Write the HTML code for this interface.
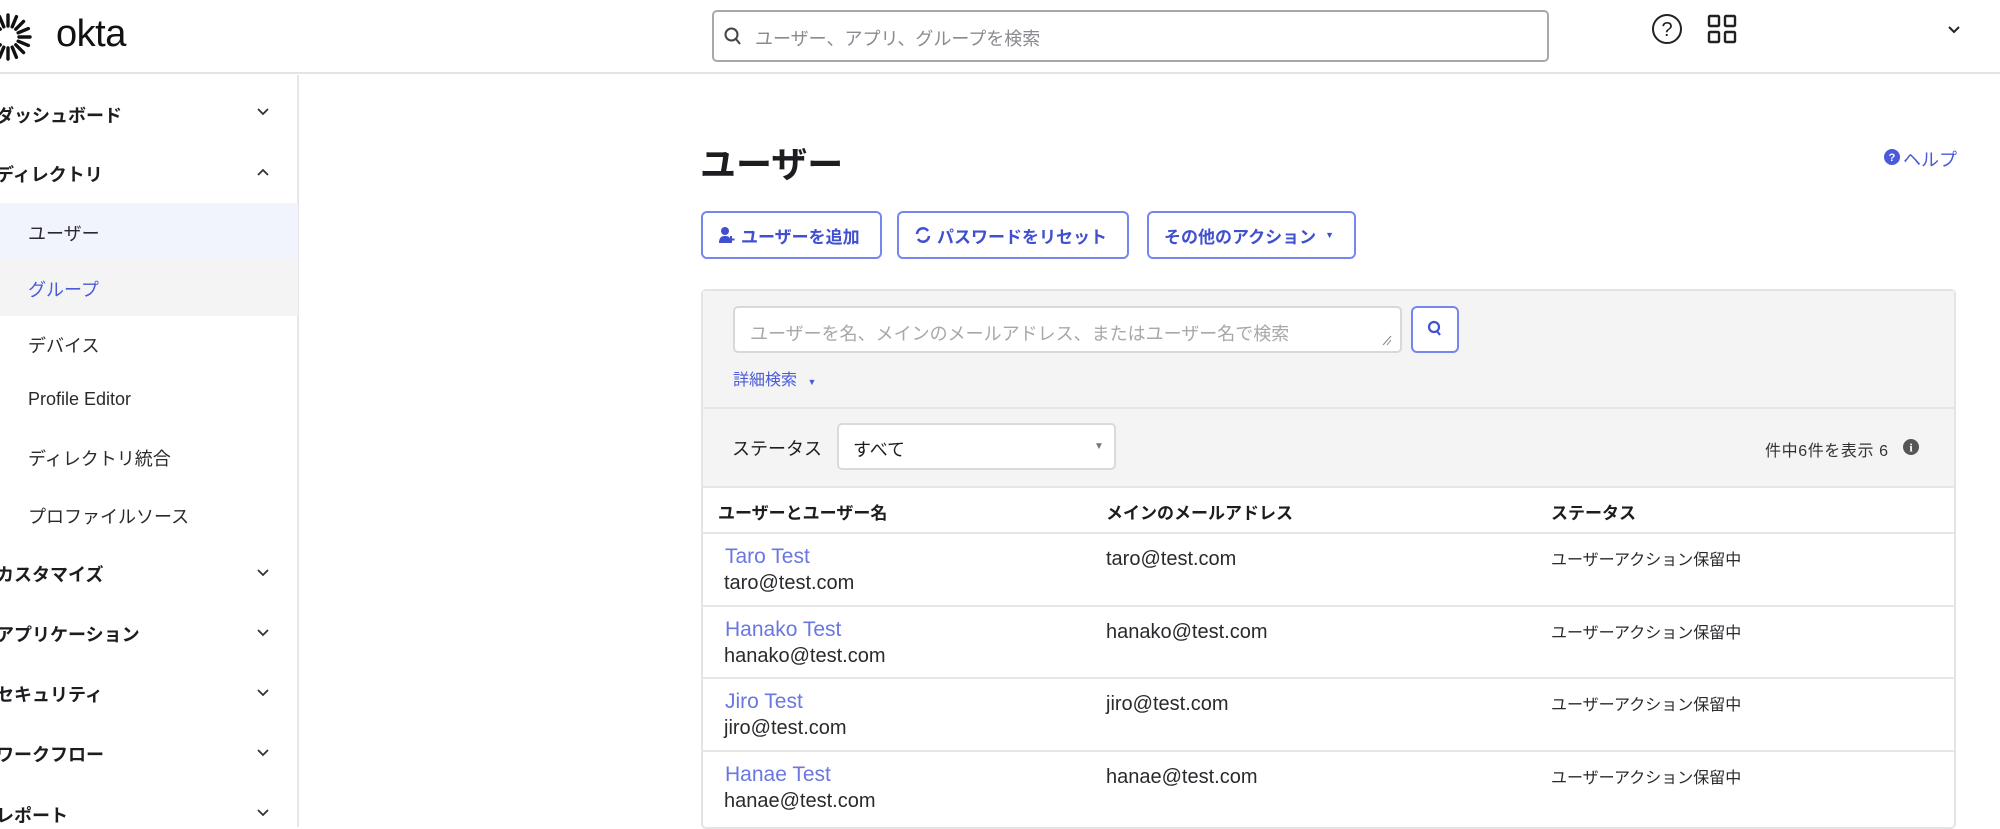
<!DOCTYPE html>
<html><head><meta charset="utf-8"><style>
*{box-sizing:border-box;margin:0;padding:0}
body{width:2000px;height:827px;overflow:hidden;background:#fff;font-family:"Liberation Sans","Noto Sans CJK JP",sans-serif;color:#1d1d21;position:relative}
.a{position:absolute;white-space:nowrap}
.hdr{position:absolute;left:0;top:0;width:2000px;height:74px;border-bottom:2px solid #e4e4e6}
.side{position:absolute;left:0;top:75px;width:299px;height:752px;border-right:2px solid #e6e6e8}
.top{font-weight:bold;font-size:18px;left:-4px}
.sub{font-size:18px;left:28px;color:#2a2a2e}
.btn{position:absolute;top:211px;height:48px;border:2px solid #7587ef;border-radius:6px;color:#4150cf;font-weight:bold;font-size:17px;display:flex;align-items:center;padding-left:15px;gap:5px}
.link{color:#6a77e0}
.th{font-weight:bold;font-size:17px;top:499px}
.nm{font-size:21px;color:#6a77e0}
.em{font-size:20px;color:#2a2a2e}
.st{font-size:16px;color:#2a2a2e}
.rl{position:absolute;left:701px;width:1254px;height:2px;background:#e6e6e6}
</style></head><body>
<div class="hdr"></div>
<svg class="a" style="left:-16px;top:13px" width="48" height="48" viewBox="-24 -24 48 48">
<g stroke="#111" stroke-width="3.4" stroke-linecap="round">
<line x1="0" y1="-11" x2="0" y2="-22" transform="rotate(0)"/><line x1="0" y1="-11" x2="0" y2="-22" transform="rotate(22.5)"/><line x1="0" y1="-11" x2="0" y2="-22" transform="rotate(45)"/><line x1="0" y1="-11" x2="0" y2="-22" transform="rotate(67.5)"/><line x1="0" y1="-11" x2="0" y2="-22" transform="rotate(90)"/><line x1="0" y1="-11" x2="0" y2="-22" transform="rotate(112.5)"/><line x1="0" y1="-11" x2="0" y2="-22" transform="rotate(135)"/><line x1="0" y1="-11" x2="0" y2="-22" transform="rotate(157.5)"/><line x1="0" y1="-11" x2="0" y2="-22" transform="rotate(180)"/><line x1="0" y1="-11" x2="0" y2="-22" transform="rotate(202.5)"/><line x1="0" y1="-11" x2="0" y2="-22" transform="rotate(225)"/><line x1="0" y1="-11" x2="0" y2="-22" transform="rotate(247.5)"/><line x1="0" y1="-11" x2="0" y2="-22" transform="rotate(270)"/><line x1="0" y1="-11" x2="0" y2="-22" transform="rotate(292.5)"/><line x1="0" y1="-11" x2="0" y2="-22" transform="rotate(315)"/><line x1="0" y1="-11" x2="0" y2="-22" transform="rotate(337.5)"/></g></svg>
<div class="a" style="left:56px;top:13px;font-size:38px;color:#111;letter-spacing:-0.5px">okta</div>
<div class="a" style="left:712px;top:10px;width:837px;height:52px;border:2px solid #a8a8ac;border-radius:5px"></div>
<svg class="a" style="left:724px;top:27px" width="18" height="20" viewBox="0 0 18 20"><circle cx="7.5" cy="7.5" r="6" fill="none" stroke="#444" stroke-width="2"/><line x1="12" y1="12" x2="16" y2="17" stroke="#444" stroke-width="2"/></svg>
<div class="a" style="left:755px;top:25px;font-size:18px;color:#8a8a90">ユーザー、アプリ、グループを検索</div>
<svg class="a" style="left:1651px;top:13px" width="32" height="32" viewBox="0 0 32 32"><circle cx="16" cy="16" r="14" fill="none" stroke="#222" stroke-width="2"/><text x="16" y="23" text-anchor="middle" font-size="20" font-family="Liberation Sans" fill="#222">?</text></svg>
<svg class="a" style="left:1707px;top:14px" width="30" height="30" viewBox="0 0 30 30" fill="none" stroke="#222" stroke-width="2.4"><rect x="2" y="2" width="10" height="10" rx="1"/><rect x="18" y="2" width="10" height="10" rx="1"/><rect x="2" y="18" width="10" height="10" rx="1"/><rect x="18" y="18" width="10" height="10" rx="1"/></svg>
<svg class="a" style="left:1947px;top:25px" width="14" height="10" viewBox="0 0 14 10"><path d="M2 2l5 5 5-5" fill="none" stroke="#222" stroke-width="2"/></svg>

<div class="side"></div>
<div class="a" style="left:0;top:203px;width:298px;height:57px;background:#f1f3fd"></div>
<div class="a" style="left:0;top:260px;width:298px;height:56px;background:#f4f4f5"></div>
<div class="a top" style="top:102px">ダッシュボード</div>
<div class="a top" style="top:161px">ディレクトリ</div>
<div class="a sub" style="top:220px">ユーザー</div>
<div class="a sub" style="top:276px;color:#4a5ad8">グループ</div>
<div class="a sub" style="top:332px">デバイス</div>
<div class="a sub" style="top:389px;font-size:18px">Profile Editor</div>
<div class="a sub" style="top:445px">ディレクトリ統合</div>
<div class="a sub" style="top:503px">プロファイルソース</div>
<div class="a top" style="top:561px">カスタマイズ</div>
<div class="a top" style="top:621px">アプリケーション</div>
<div class="a top" style="top:681px">セキュリティ</div>
<div class="a top" style="top:741px">ワークフロー</div>
<div class="a top" style="top:802px">レポート</div>
<svg class="a" style="left:256px;top:107px" width="14" height="10"><path d="M2 2l5 5 5-5" fill="none" stroke="#333" stroke-width="1.8"/></svg>
<svg class="a" style="left:256px;top:167px" width="14" height="10"><path d="M2 8l5-5 5 5" fill="none" stroke="#333" stroke-width="1.8"/></svg>
<svg class="a" style="left:256px;top:568px" width="14" height="10"><path d="M2 2l5 5 5-5" fill="none" stroke="#333" stroke-width="1.8"/></svg>
<svg class="a" style="left:256px;top:628px" width="14" height="10"><path d="M2 2l5 5 5-5" fill="none" stroke="#333" stroke-width="1.8"/></svg>
<svg class="a" style="left:256px;top:688px" width="14" height="10"><path d="M2 2l5 5 5-5" fill="none" stroke="#333" stroke-width="1.8"/></svg>
<svg class="a" style="left:256px;top:748px" width="14" height="10"><path d="M2 2l5 5 5-5" fill="none" stroke="#333" stroke-width="1.8"/></svg>
<svg class="a" style="left:256px;top:808px" width="14" height="10"><path d="M2 2l5 5 5-5" fill="none" stroke="#333" stroke-width="1.8"/></svg>

<div class="a" style="left:700px;top:136px;font-size:36px;font-weight:bold;color:#1d1d21">ユーザー</div>
<svg class="a" style="left:1884px;top:149px" width="16" height="16"><circle cx="8" cy="8" r="8" fill="#4a5ad8"/><text x="8" y="12" text-anchor="middle" font-size="11" font-weight="bold" fill="#fff" font-family="Liberation Sans">?</text></svg>
<div class="a link" style="left:1903px;top:146px;font-size:18px;color:#4a5ad8">ヘルプ</div>

<div class="btn" style="left:701px;width:181px"><svg width="18" height="18" viewBox="0 0 18 18"><circle cx="7" cy="5" r="4" fill="#4150cf"/><path d="M1 17c0-6 3-7 6-7s5 1 5 3v4z" fill="#4150cf"/><path d="M13 10v7M9.5 13.5h7" stroke="#4150cf" stroke-width="2"/></svg>ユーザーを追加</div>
<div class="btn" style="left:897px;width:232px"><svg width="18" height="18" viewBox="0 0 18 18" fill="none" stroke="#4150cf" stroke-width="2.6"><path d="M3 8a6 6 0 0 1 11-3"/><path d="M15 10a6 6 0 0 1-11 3"/></svg>パスワードをリセット</div>
<div class="btn" style="left:1147px;width:209px">その他のアクション <span style="font-size:9px;margin-left:4px">▼</span></div>

<div class="a" style="left:701px;top:289px;width:1255px;height:540px;border:2px solid #e4e4e4;border-radius:5px;background:#fff"></div>
<div class="a" style="left:703px;top:291px;width:1251px;height:195px;background:#f4f4f4"></div>
<div class="rl" style="top:407px"></div>
<div class="a" style="left:733px;top:306px;width:669px;height:47px;border:2px solid #d8d8d8;border-radius:5px;background:#fff"></div>
<div class="a" style="left:750px;top:320px;font-size:18px;color:#a8a8ac">ユーザーを名、メインのメールアドレス、またはユーザー名で検索</div>
<svg class="a" style="left:1382px;top:334px" width="10" height="12"><path d="M1 11l8-9M5 11l4-5" stroke="#888" stroke-width="1"/></svg>
<div class="a" style="left:1411px;top:306px;width:48px;height:47px;border:2px solid #7587ef;border-radius:6px;background:#fff"></div>
<svg class="a" style="left:1427px;top:320px" width="16" height="18" viewBox="0 0 16 18"><circle cx="7" cy="7" r="5" fill="none" stroke="#4150cf" stroke-width="2.2"/><line x1="10" y1="11" x2="13" y2="15" stroke="#4150cf" stroke-width="2.2"/></svg>
<div class="a link" style="left:733px;top:366px;font-size:16px;color:#4a5ad8">詳細検索 <span style="font-size:9px;margin-left:6px">▼</span></div>

<div class="a" style="left:732px;top:435px;font-size:18px">ステータス</div>
<div class="a" style="left:837px;top:423px;width:279px;height:47px;border:2px solid #dadada;border-radius:5px;background:#fff"></div>
<div class="a" style="left:853px;top:436px;font-size:18px">すべて</div>
<div class="a" style="left:1094px;top:441px;font-size:10px;color:#777">▼</div>
<div class="a" style="left:1765px;top:437px;font-size:16px;color:#333;letter-spacing:0.6px">件中6件を表示 6</div>
<svg class="a" style="left:1903px;top:439px" width="16" height="16"><circle cx="8" cy="8" r="8" fill="#555"/><text x="8" y="12.5" text-anchor="middle" font-size="12" font-weight="bold" fill="#fff" font-family="Liberation Serif">i</text></svg>
<div class="rl" style="top:486px"></div>
<div class="a th" style="left:718px">ユーザーとユーザー名</div>
<div class="a th" style="left:1106px">メインのメールアドレス</div>
<div class="a th" style="left:1551px">ステータス</div>
<div class="rl" style="top:532px"></div>

<div class="a nm" style="left:725px;top:545px">Taro Test</div>
<div class="a em" style="left:724px;top:572px">taro@test.com</div>
<div class="a em" style="left:1106px;top:548px">taro@test.com</div>
<div class="a st" style="left:1551px;top:546px">ユーザーアクション保留中</div>
<div class="rl" style="top:605px"></div>
<div class="a nm" style="left:725px;top:618px">Hanako Test</div>
<div class="a em" style="left:724px;top:645px">hanako@test.com</div>
<div class="a em" style="left:1106px;top:621px">hanako@test.com</div>
<div class="a st" style="left:1551px;top:619px">ユーザーアクション保留中</div>
<div class="rl" style="top:677px"></div>
<div class="a nm" style="left:725px;top:690px">Jiro Test</div>
<div class="a em" style="left:724px;top:717px">jiro@test.com</div>
<div class="a em" style="left:1106px;top:693px">jiro@test.com</div>
<div class="a st" style="left:1551px;top:691px">ユーザーアクション保留中</div>
<div class="rl" style="top:750px"></div>
<div class="a nm" style="left:725px;top:763px">Hanae Test</div>
<div class="a em" style="left:724px;top:790px">hanae@test.com</div>
<div class="a em" style="left:1106px;top:766px">hanae@test.com</div>
<div class="a st" style="left:1551px;top:764px">ユーザーアクション保留中</div>
</body></html>
